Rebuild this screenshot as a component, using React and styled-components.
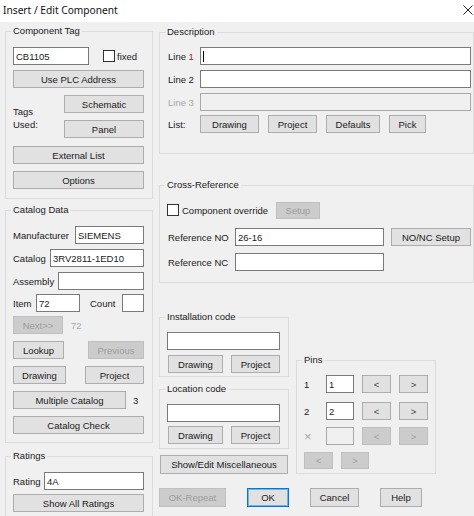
import React from 'react'
import styled, { createGlobalStyle } from 'styled-components'

const GlobalStyle = createGlobalStyle`
  html, body { margin: 0; padding: 0; background: #f0f0f0; }
  * { box-sizing: border-box; }
`;

export default function App() {
  return (
    <>
      <GlobalStyle />
      <Window>
        <TitleBar>
          <span>Insert / Edit Component</span>
          <svg width="10" height="10" viewBox="0 0 10 10">
            <path d="M0.5 0.5 L9.5 9.5 M9.5 0.5 L0.5 9.5" stroke="#222" strokeWidth="1" fill="none" />
          </svg>
        </TitleBar>

        <Body>
          <LeftCol>
            <Group $mt={3}>
              <Legend>Component Tag</Legend>
              <GroupBody $pad="10px 8px 9px 7px">
                <Row>
                  <TextBox $w={76}>CB1105</TextBox>
                  <Check $ml={14} />
                  <Text $ml={2}>fixed</Text>
                </Row>
                <Button $mt={5}>Use PLC Address</Button>
                <Row $mt={7} $h={43}>
                  <TwoLine>Tags<br />Used:</TwoLine>
                  <ButtonStack>
                    <Button $w={80}>Schematic</Button>
                    <Button $w={80}>Panel</Button>
                  </ButtonStack>
                </Row>
                <Button $mt={8}>External List</Button>
                <Button $mt={7}>Options</Button>
              </GroupBody>
            </Group>

            <Group $mt={5}>
              <Legend>Catalog Data</Legend>
              <GroupBody $pad="10px 8px 8px 7px">
                <Row $between>
                  <Text>Manufacturer</Text>
                  <TextBox $w={69}>SIEMENS</TextBox>
                </Row>
                <Row $mt={5} $between>
                  <Text>Catalog</Text>
                  <TextBox $w={94}>3RV2811-1ED10</TextBox>
                </Row>
                <Row $mt={5} $between>
                  <Text>Assembly</Text>
                  <TextBox $w={86} />
                </Row>
                <Row $mt={4}>
                  <Text $w={23}>Item</Text>
                  <TextBox $w={44}>72</TextBox>
                  <Text $w={32} $ml={10}>Count</Text>
                  <TextBox $w={22} />
                </Row>
                <Row $mt={4}>
                  <Button $w={50} disabled>Next&gt;&gt;</Button>
                  <Text $ml={8} $muted>72</Text>
                </Row>
                <Row $mt={7} $between>
                  <Button $w={51}>Lookup</Button>
                  <Button $w={56} disabled>Previous</Button>
                </Row>
                <Row $mt={7} $between>
                  <Button $w={53}>Drawing</Button>
                  <Button $w={59}>Project</Button>
                </Row>
                <Row $mt={7}>
                  <Button $w={113}>Multiple Catalog</Button>
                  <Text $ml={7}>3</Text>
                </Row>
                <Button $mt={7}>Catalog Check</Button>
              </GroupBody>
            </Group>

            <Group $mt={7}>
              <Legend>Ratings</Legend>
              <GroupBody $pad="10px 8px 20px 7px">
                <Row $between>
                  <Text>Rating</Text>
                  <TextBox $w={100}>4A</TextBox>
                </Row>
                <Button $mt={4}>Show All Ratings</Button>
              </GroupBody>
            </Group>
          </LeftCol>

          <RightCol>
            <Group $mt={4}>
              <Legend>Description</Legend>
              <GroupBody $pad="9px 2px 20px 8px">
                <Row>
                  <Text $w={32}>Line <Red>1</Red></Text>
                  <TextBox $grow><Caret /></TextBox>
                </Row>
                <Row $mt={5}>
                  <Text $w={32}>Line 2</Text>
                  <TextBox $grow />
                </Row>
                <Row $mt={5}>
                  <Text $w={32} $muted>Line 3</Text>
                  <TextBox $grow $disabled />
                </Row>
                <Row $mt={4}>
                  <Text $w={32}>List:</Text>
                  <Button $w={59}>Drawing</Button>
                  <Button $w={49} $ml={9}>Project</Button>
                  <Button $w={54} $ml={9}>Defaults</Button>
                  <Button $w={37} $ml={9}>Pick</Button>
                </Row>
              </GroupBody>
            </Group>

            <Group $mt={25}>
              <Legend>Cross-Reference</Legend>
              <GroupBody $pad="10px 2px 11px 8px">
                <Row>
                  <CheckLabel>
                    <Check $ml={-1} />
                    <Text $ml={3}>Component override</Text>
                  </CheckLabel>
                  <Button $w={44} $h={17} disabled>Setup</Button>
                </Row>
                <Row $mt={9}>
                  <Text $w={67}>Reference NO</Text>
                  <TextBox $w={149}>26-16</TextBox>
                  <Button $w={80} $ml={7}>NO/NC Setup</Button>
                </Row>
                <Row $mt={7}>
                  <Text $w={67}>Reference NC</Text>
                  <TextBox $w={149} />
                </Row>
              </GroupBody>
            </Group>

            <LowerRow>
              <CodeCol>
                <Group>
                  <Legend>Installation code</Legend>
                  <GroupBody $pad="9px 8px 3px 7px">
                    <TextBox />
                    <Row $mt={5} $between>
                      <Button $w={55} $ml={1}>Drawing</Button>
                      <Button $w={49}>Project</Button>
                    </Row>
                  </GroupBody>
                </Group>
                <Group $mt={6}>
                  <Legend>Location code</Legend>
                  <GroupBody $pad="9px 8px 4px 7px">
                    <TextBox />
                    <Row $mt={4} $between>
                      <Button $w={55} $ml={1}>Drawing</Button>
                      <Button $w={49}>Project</Button>
                    </Row>
                  </GroupBody>
                </Group>
                <Button $w={128} $h={19} $mt={6} $ml={1}>Show/Edit Miscellaneous</Button>
              </CodeCol>

              <Group $mt={43} $w={140}>
                <Legend>Pins</Legend>
                <GroupBody $pad="9px 7px 4px 7px">
                  <Row>
                    <Text $w={22}>1</Text>
                    <TextBox $w={28}>1</TextBox>
                    <Button $w={29} $ml={8} $dim>&lt;</Button>
                    <Button $w={29} $ml={8} $dim>&gt;</Button>
                  </Row>
                  <Row $mt={9}>
                    <Text $w={22}>2</Text>
                    <TextBox $w={28}>2</TextBox>
                    <Button $w={29} $ml={8} $dim>&lt;</Button>
                    <Button $w={29} $ml={8} $dim>&gt;</Button>
                  </Row>
                  <Row $mt={7}>
                    <Text $w={22} $muted $big>×</Text>
                    <TextBox $w={28} $disabled />
                    <Button $w={29} $ml={8} disabled>&lt;</Button>
                    <Button $w={29} $ml={8} disabled>&gt;</Button>
                  </Row>
                  <Row $mt={7} $h={17}>
                    <Button $w={29} $h={17} disabled>&lt;</Button>
                    <Button $w={28} $h={17} $ml={8} disabled>&gt;</Button>
                  </Row>
                </GroupBody>
              </Group>
            </LowerRow>

            <Row $mt={14} $h={19}>
              <Button $w={67} $h={19} disabled>OK-Repeat</Button>
              <DefaultButton $w={42} $h={19} $ml={21}>OK</DefaultButton>
              <Button $w={49} $h={19} $ml={21}>Cancel</Button>
              <Button $w={42} $h={19} $ml={21}>Help</Button>
            </Row>
          </RightCol>
        </Body>
      </Window>
    </>
  )
}

const Window = styled.div`
  width: 474px;
  height: 516px;
  overflow: hidden;
  background: #f0f0f0;
  font-family: "Liberation Sans", Arial, sans-serif;
  font-size: 9.5px;
  color: #1a1a1a;
`;

const TitleBar = styled.div`
  height: 22px;
  background: #fff;
  display: flex;
  align-items: center;
  justify-content: space-between;
  padding: 0 1px 2px 3px;
  font-family: "Noto Sans", sans-serif;
  font-size: 10.2px;
  color: #111;
`;

const Body = styled.div`
  display: flex;
  gap: 6px;
  padding-left: 5px;
`;

const LeftCol = styled.div`
  width: 148px;
  flex: none;
  display: flex;
  flex-direction: column;
`;

const RightCol = styled.div`
  width: 315px;
  flex: none;
  display: flex;
  flex-direction: column;
`;

const Group = styled.fieldset`
  margin: ${p => p.$mt || 0}px 0 0;
  padding: 0;
  min-width: 0;
  border: 1px solid #dcdcdc;
  width: ${p => (p.$w ? `${p.$w}px` : 'auto')};
  flex: none;
`;

const Legend = styled.legend`
  margin-left: 5px;
  padding: 0 2px;
  height: 12px;
  line-height: 12px;
  font-size: 9.5px;
`;

const GroupBody = styled.div`
  padding: ${p => p.$pad};
  display: flex;
  flex-direction: column;
`;

const Row = styled.div`
  display: flex;
  align-items: center;
  height: ${p => p.$h || 18}px;
  margin-top: ${p => p.$mt || 0}px;
  justify-content: ${p => (p.$between ? 'space-between' : 'flex-start')};
  flex: none;
`;

const Text = styled.span`
  width: ${p => (p.$w ? `${p.$w}px` : 'auto')};
  margin-left: ${p => p.$ml || 0}px;
  color: ${p => (p.$muted ? '#a8a8a8' : '#1a1a1a')};
  font-size: ${p => (p.$big ? '13px' : 'inherit')};
  white-space: nowrap;
  flex: none;
`;

const Red = styled.span`
  color: #a3261f;
`;

const TwoLine = styled.div`
  line-height: 13px;
  padding-top: 2px;
`;

const ButtonStack = styled.div`
  margin-left: auto;
  display: flex;
  flex-direction: column;
  gap: 7px;
`;

const TextBox = styled.div`
  height: 18px;
  width: ${p => (p.$w ? `${p.$w}px` : 'auto')};
  flex: ${p => (p.$grow ? '1' : 'none')};
  background: ${p => (p.$disabled ? '#f0f0f0' : '#fff')};
  border: 1px solid ${p => (p.$disabled ? '#a9a9a9' : '#7a7a7a')};
  padding-left: 2px;
  display: flex;
  align-items: center;
  white-space: nowrap;
  overflow: hidden;
`;

const Caret = styled.span`
  width: 1px;
  height: 11px;
  background: #000;
`;

const Check = styled.span`
  width: 12px;
  height: 12px;
  margin-left: ${p => p.$ml || 0}px;
  border: 1px solid #333;
  background: #fff;
  flex: none;
`;

const CheckLabel = styled.div`
  width: 108px;
  display: flex;
  align-items: center;
  flex: none;
`;

const Button = styled.button`
  width: ${p => (p.$w ? `${p.$w}px` : '100%')};
  height: ${p => p.$h || 18}px;
  margin: ${p => p.$mt || 0}px 0 0 ${p => p.$ml || 0}px;
  padding: 0;
  flex: none;
  font: inherit;
  color: ${p => (p.$dim ? '#444' : '#1a1a1a')};
  background: #e1e1e1;
  border: 1px solid #adadad;
  border-radius: 0;
  white-space: nowrap;

  &:disabled {
    background: #cccccc;
    border-color: #bfbfbf;
    color: #9c9c9c;
  }
`;

const DefaultButton = styled(Button)`
  border-color: #0078d7;
  box-shadow: inset 0 0 0 1px rgba(0, 120, 215, 0.45);
`;

const LowerRow = styled.div`
  display: flex;
  align-items: flex-start;
  gap: 7px;
  margin-top: 28px;
`;

const CodeCol = styled.div`
  width: 130px;
  flex: none;
  display: flex;
  flex-direction: column;
`;
